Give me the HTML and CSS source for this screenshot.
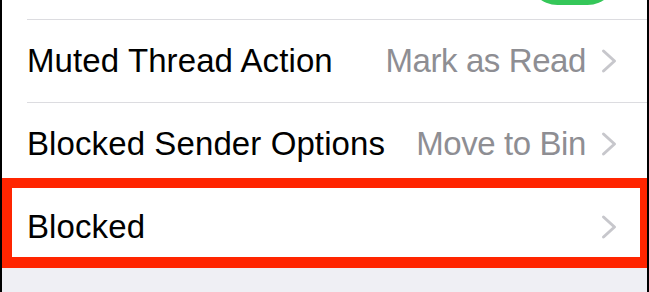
FILE: index.html
```html
<!DOCTYPE html>
<html lang="en">
<head>
    <meta charset="UTF-8">
    <meta name="viewport" content="width=device-width, initial-scale=1.0">
    <title>Mail Settings</title>
    <link rel="stylesheet" href="styles.css">
</head>
<body>

    <div class="screen">
        <div class="group">
            <!-- bottom of the toggle row, cut off at the top -->
            <div class="row row-cut">
                <span class="toggle"></span>
            </div>

            <div class="row">
                <span class="label">Muted Thread Action</span>
                <span class="value">Mark as Read</span>
                <svg class="chevron" width="16" height="26" viewBox="0 0 16 26">
                    <path d="M2.5 3 L13.5 13 L2.5 23" fill="none" stroke="#c7c7cc" stroke-width="3" stroke-linecap="round" stroke-linejoin="round"/>
                </svg>
            </div>

            <div class="row">
                <span class="label">Blocked Sender Options</span>
                <span class="value">Move to Bin</span>
                <svg class="chevron" width="16" height="26" viewBox="0 0 16 26">
                    <path d="M2.5 3 L13.5 13 L2.5 23" fill="none" stroke="#c7c7cc" stroke-width="3" stroke-linecap="round" stroke-linejoin="round"/>
                </svg>
            </div>

            <div class="row last">
                <span class="label">Blocked</span>
                <span class="value"></span>
                <svg class="chevron" width="16" height="26" viewBox="0 0 16 26">
                    <path d="M2.5 3 L13.5 13 L2.5 23" fill="none" stroke="#c7c7cc" stroke-width="3" stroke-linecap="round" stroke-linejoin="round"/>
                </svg>
                <div class="highlight-box"></div>
            </div>
        </div>
    </div>

</body>
</html>
```

FILE: styles.css
```css
/* base */
body {
    margin: 0;
    background: #000;
    font-family: "Liberation Sans", Arial, sans-serif;
    overflow: hidden;
}

.screen {
    margin: 0 2px;
    height: 292px;
    background: #efeff4;
}

.group {
    background: #fff;
}

/* rows */
.row {
    position: relative;
    display: flex;
    align-items: center;
    height: 82px;
    margin-top: 1px; /* room for the separator above */
    padding: 0 30px 0 25px;
}

/* inset separator, iOS style */
.row::after {
    content: "";
    position: absolute;
    left: 25px;
    right: 0;
    bottom: -1px;
    height: 1px;
    background: #dcdce0;
}

.row.last::after { display: none; }

.row-cut {
    height: 19px;
    margin-top: 0;
    align-items: flex-end;
    justify-content: flex-end;
    padding-right: 30px;
}

.label {
    font-size: 33px;
    color: #000;
    white-space: nowrap;
    letter-spacing: 0.1px;
}

.value {
    margin-left: auto;
    font-size: 33px;
    color: #8e8e93;
    white-space: nowrap;
    letter-spacing: -0.4px;
}

.chevron {
    margin-left: 15px;
    flex-shrink: 0;
}

/* switch, only its lower edge shows */
.toggle {
    display: block;
    width: 89px;
    height: 59px;
    margin-bottom: 14px;
    border-radius: 30px;
    background: #35c759;
}

/* red callout drawn over the last row */
.highlight-box {
    position: absolute;
    top: -8px;
    left: 0;
    right: 0;
    bottom: 0;
    border-style: solid;
    border-color: #ff2500;
    border-width: 10px 7px 11px 10px;
    pointer-events: none;
}
```
